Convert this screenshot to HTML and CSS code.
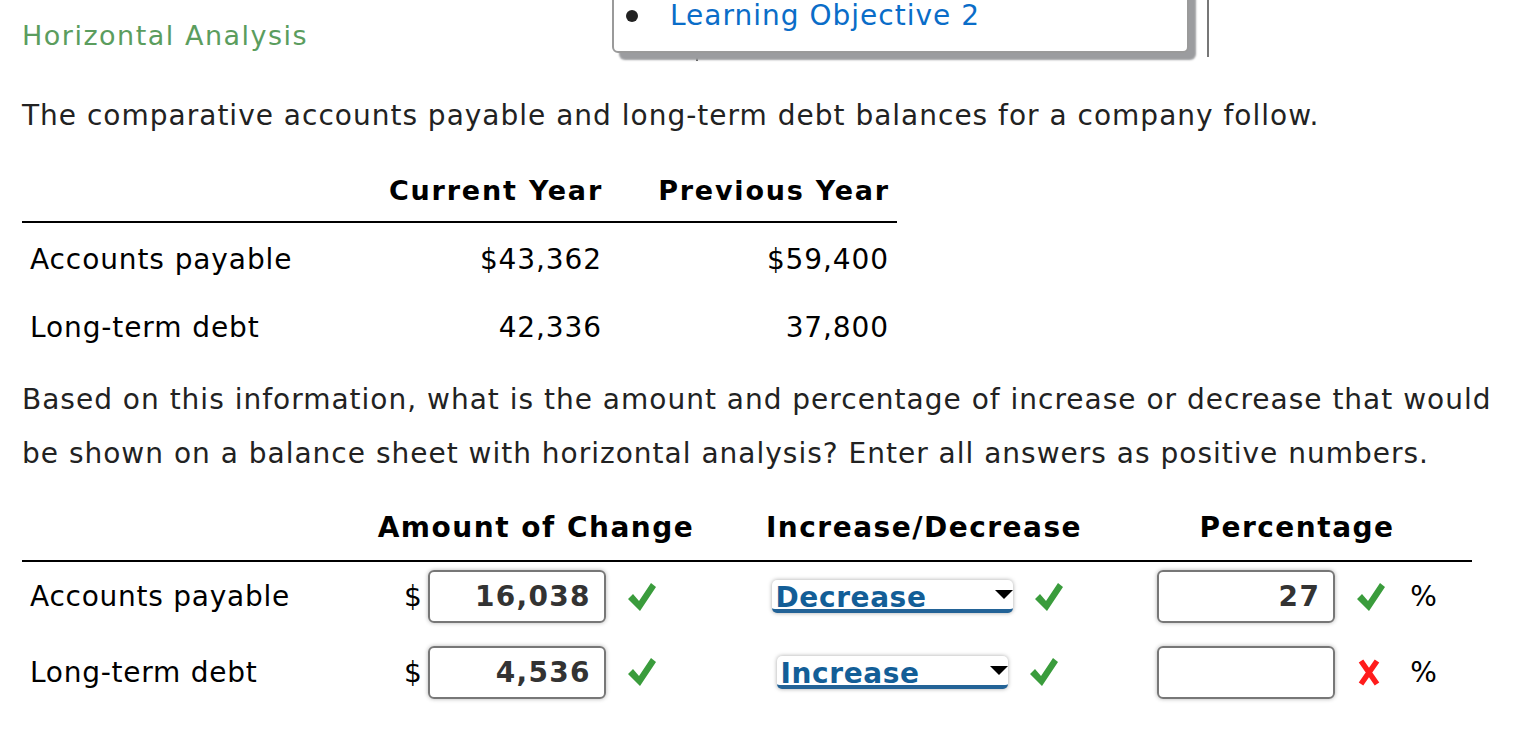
FILE: index.html
```html
<!DOCTYPE html>
<html lang="en">
  <head>
    <meta charset="UTF-8" />
    <meta name="viewport" content="width=device-width, initial-scale=1.0" />
    <title>Horizontal Analysis</title>
    <link rel="stylesheet" href="styles.css">
  </head>
  <body>
    <div class="page">
      <!-- learning objective popup, hangs over the top of the page -->
      <div class="lo-popup">
        <ul>
          <li><a href="#">Learning Objective 2</a></li>
        </ul>
      </div>
      <div class="lo-tick"></div>
      <div class="lo-rule"></div>

      <h2 class="title">Horizontal Analysis</h2>
      <p class="intro">The comparative accounts payable and long-term debt balances for a company follow.</p>

      <table class="balances">
        <thead>
          <tr>
            <th class="label"></th>
            <th class="num">Current Year</th>
            <th class="num">Previous Year</th>
          </tr>
        </thead>
        <tbody>
          <tr class="first">
            <td class="label">Accounts payable</td>
            <td class="num">$43,362</td>
            <td class="num">$59,400</td>
          </tr>
          <tr>
            <td class="label">Long-term debt</td>
            <td class="num">42,336</td>
            <td class="num">37,800</td>
          </tr>
        </tbody>
      </table>

      <p class="question">Based on this information, what is the amount and percentage of increase or decrease that would be shown on a balance sheet with horizontal analysis? Enter all answers as positive numbers.</p>

      <table class="answers">
        <thead>
          <tr>
            <th class="label"></th>
            <th>Amount of Change</th>
            <th>Increase/Decrease</th>
            <th>Percentage</th>
          </tr>
        </thead>
        <tbody>
          <tr class="first">
            <td class="label">Accounts payable</td>
            <td>
              <div class="cell">
                <span class="dollar">$</span>
                <div class="box">16,038</div>
                <svg class="mark" viewBox="0 0 28 30"><polygon points="0,17 5,12 11,19 23,1 28,5 12,29" /></svg>
              </div>
            </td>
            <td>
              <div class="cell">
                <div class="pick wide"><span>Decrease</span><i class="arrow"></i></div>
                <svg class="mark" viewBox="0 0 28 30"><polygon points="0,17 5,12 11,19 23,1 28,5 12,29" /></svg>
              </div>
            </td>
            <td>
              <div class="cell">
                <div class="box">27</div>
                <svg class="mark" viewBox="0 0 28 30"><polygon points="0,17 5,12 11,19 23,1 28,5 12,29" /></svg>
                <span class="pct">%</span>
              </div>
            </td>
          </tr>
          <tr class="second">
            <td class="label">Long-term debt</td>
            <td>
              <div class="cell">
                <span class="dollar">$</span>
                <div class="box">4,536</div>
                <svg class="mark" viewBox="0 0 28 30"><polygon points="0,17 5,12 11,19 23,1 28,5 12,29" /></svg>
              </div>
            </td>
            <td>
              <div class="cell">
                <div class="pick"><span>Increase</span><i class="arrow"></i></div>
                <svg class="mark" viewBox="0 0 28 30"><polygon points="0,17 5,12 11,19 23,1 28,5 12,29" /></svg>
              </div>
            </td>
            <td>
              <div class="cell">
                <div class="box"></div>
                <svg class="mark wrong" viewBox="0 0 28 30"><path d="M4 4 L20 27 M20 4 L4 27" /></svg>
                <span class="pct">%</span>
              </div>
            </td>
          </tr>
        </tbody>
      </table>
    </div>
  </body>
</html>
```

FILE: styles.css
```css
* {
  margin: 0;
  padding: 0;
  box-sizing: border-box;
}
body {
  font-family: "DejaVu Sans", Verdana, sans-serif;
  font-size: 28px;
  letter-spacing: 1px;
  color: #222;
  background: #fff;
  overflow: hidden;
}
.page {
  position: relative;
  padding: 0 0 0 22px;
}

/* popup */
.lo-popup {
  position: absolute;
  left: 612px;
  top: -20px;
  width: 577px;
  height: 73px;
  background: #fff;
  border: 2px solid #9a9a9a;
  box-shadow: 7px 7px 2px #9b9c9f;
  border-radius: 0 0 6px 6px;
  z-index: 2;
}
.lo-popup ul {
  list-style: none;
  padding: 17px 0 0 12px;
}
.lo-popup li {
  display: flex;
  align-items: center;
  line-height: 34px;
}
.lo-popup li::before {
  content: "";
  width: 12px;
  height: 12px;
  border-radius: 50%;
  background: #222;
  margin-right: 32px;
}
.lo-popup a {
  color: #0a6dc8;
  text-decoration: none;
}
.lo-tick {
  position: absolute;
  left: 696px;
  top: 50px;
  width: 2px;
  height: 11px;
  background: #555;
}
.lo-rule {
  position: absolute;
  left: 1207px;
  top: 0;
  width: 2px;
  height: 57px;
  background: #777;
}

.title {
  font-weight: normal;
  font-size: 27px;
  letter-spacing: 1.5px;
  color: #5b9d5e;
  line-height: 36px;
  padding-top: 18px;
}
.intro {
  margin-top: 42px;
  line-height: 40px;
}

/* balances table */
.balances {
  border-collapse: collapse;
  margin-top: 24px;
  width: 875px;
}
.balances th {
  height: 62px;
  font-weight: bold;
  border-bottom: 2px solid #000;
  color: #000;
  font-size: 27px;
  letter-spacing: 1.8px;
}
.balances td {
  height: 68px;
  color: #000;
  letter-spacing: 0.9px;
}
.balances .first td {
  height: 71px;
  padding-top: 3px;
}
.balances .label {
  text-align: left;
  padding-left: 8px;
  width: 360px;
}
.balances .num {
  text-align: right;
  padding-right: 8px;
}
.balances th.num {
  padding-right: 7px;
}
.balances th.num:nth-child(2) {
  width: 228px;
}

.question {
  margin-top: 12px;
  width: 1490px;
  line-height: 54px;
}

/* answers table */
.answers {
  border-collapse: collapse;
  margin-top: 14px;
  width: 1450px;
}
.answers th {
  height: 66px;
  font-weight: bold;
  color: #000;
  letter-spacing: 1.5px;
  border-bottom: 2px solid #000;
  text-align: center;
}
.answers th:nth-child(1) {
  width: 350px;
}
.answers th:nth-child(2) {
  width: 328px;
}
.answers th:nth-child(3) {
  width: 448px;
}
.answers th:nth-child(4) {
  width: 324px;
  padding-right: 26px;
}
.answers .label {
  text-align: left;
  padding-left: 8px;
  color: #000;
  letter-spacing: 0.75px;
}
.answers .first td {
  height: 72px;
  padding-bottom: 2px;
}
.answers .second td {
  height: 78px;
}
.cell {
  display: flex;
  align-items: center;
  justify-content: center;
}
.answers td:nth-child(2) .cell {
  padding-right: 12px;
}
.answers td:nth-child(3) .cell {
  padding-right: 14px;
}
.answers td:nth-child(4) .cell {
  padding-right: 26px;
}
.dollar {
  color: #000;
  letter-spacing: 0;
  margin-right: 6px;
}
.box {
  width: 178px;
  height: 53px;
  border: 2px solid #777;
  border-radius: 6px;
  box-shadow: 0 0 4px rgba(0, 0, 0, 0.3);
  font-weight: bold;
  color: #333;
  letter-spacing: 1.3px;
  text-align: right;
  padding-right: 13px;
  line-height: 49px;
}
.mark {
  width: 28px;
  height: 30px;
  margin-left: 22px;
  fill: #3a9c3c;
}
.mark.wrong {
  fill: none;
  stroke: #ff1c1c;
  stroke-width: 5.5;
}
.pct {
  color: #000;
  letter-spacing: 0;
  margin-left: 25px;
}
.pick {
  position: relative;
  width: 231px;
  height: 33px;
  background: #fff;
  border-radius: 5px;
  box-shadow: 0 0 4px rgba(0, 0, 0, 0.35);
  border-bottom: 4px solid #236397;
  font-weight: bold;
  color: #135e97;
  letter-spacing: 0.6px;
  line-height: 35px;
  padding-left: 4px;
  text-align: left;
}
.pick.wide {
  width: 241px;
}
.arrow {
  position: absolute;
  right: 0;
  top: 10px;
  border-left: 9px solid transparent;
  border-right: 9px solid transparent;
  border-top: 9px solid #000;
}
```
